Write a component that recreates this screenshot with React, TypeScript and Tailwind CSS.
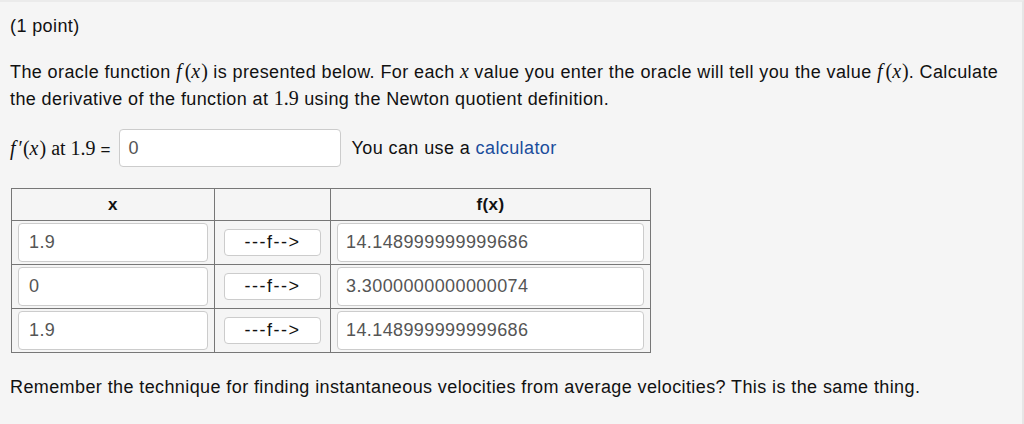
import React from 'react';

const rows = [
  { x: '1.9', fx: '14.148999999999686' },
  { x: '0', fx: '3.3000000000000074' },
  { x: '1.9', fx: '14.148999999999686' },
];

function M({ children }: { children: React.ReactNode }) {
  return <span className="font-['Liberation_Serif',serif] text-[20px] tracking-normal">{children}</span>;
}

function Fx() {
  return (
    <M>
      <i className="pr-[3px]">f</i>(<i className="pr-[1px]">x</i>)
    </M>
  );
}

export default function App() {
  return (
    <div className="w-[1024px] h-[424px] bg-[#f5f5f5] border-t-2 border-[#ebebeb] border-r-2 border-r-[#e6e6e6] font-['Liberation_Sans',Arial,sans-serif] text-[18px] tracking-[0.4px] text-[#111] overflow-hidden">
      <div className="pl-[10px] pt-[13px]">
        <p className="leading-[22px]">(1 point)</p>

        <p className="mt-[21px] leading-[26px] pr-2">
          The oracle function <Fx /> is presented below. For each <M><i>x</i></M> value you enter the oracle
          will tell you the value <Fx />. Calculate the derivative of the function at <M>1.9</M> using the
          Newton quotient definition.
        </p>

        <div className="mt-[17px] flex items-center h-[38px]">
          <span className="font-['Liberation_Serif',serif] text-[20px] tracking-normal">
            <i className="pr-[3px]">f</i>′(<i className="pr-[1px]">x</i>) at 1.9{' '}
            <span className="font-['Liberation_Sans',Arial,sans-serif] text-[17px]">=</span>
          </span>
          <div className="ml-[8px] w-[222px] h-[38px] bg-white border border-[#ccc] rounded-[4px] flex items-center px-[9px] text-[#555]">
            0
          </div>
          <span className="ml-[11px]">
            You can use a <span className="text-[#1a4d9c]">calculator</span>
          </span>
        </div>

        <table className="mt-[21px] ml-[1px] border-collapse border border-[#444] w-[640px]">
          <thead>
            <tr className="h-[32px]">
              <th className="border border-[#777] w-[203px] font-bold text-[17px]">x</th>
              <th className="border border-[#777] w-[116px]"></th>
              <th className="border border-[#777] font-bold text-[17px]">f(x)</th>
            </tr>
          </thead>
          <tbody>
            {rows.map((r, i) => (
              <tr key={i} className="h-[44px]">
                <td className="border border-[#777] px-[6px]">
                  <div className="h-[39px] bg-white border border-[#ccc] rounded-[4px] flex items-center px-[10px] text-[#555]">
                    {r.x}
                  </div>
                </td>
                <td className="border border-[#777] px-[8px]">
                  <div className="h-[27px] w-[97px] mx-auto bg-white border border-[#ccc] rounded-[4px] flex items-center justify-center text-[#111] tracking-[1.5px]">
                    ---f--&gt;
                  </div>
                </td>
                <td className="border border-[#777] px-[6px]">
                  <div className="h-[39px] bg-white border border-[#ccc] rounded-[4px] flex items-center px-[8px] text-[#555]">
                    {r.fx}
                  </div>
                </td>
              </tr>
            ))}
          </tbody>
        </table>

        <p className="mt-[23px] leading-[22px]">
          Remember the technique for finding instantaneous velocities from average velocities? This is the same thing.
        </p>
      </div>
    </div>
  );
}
